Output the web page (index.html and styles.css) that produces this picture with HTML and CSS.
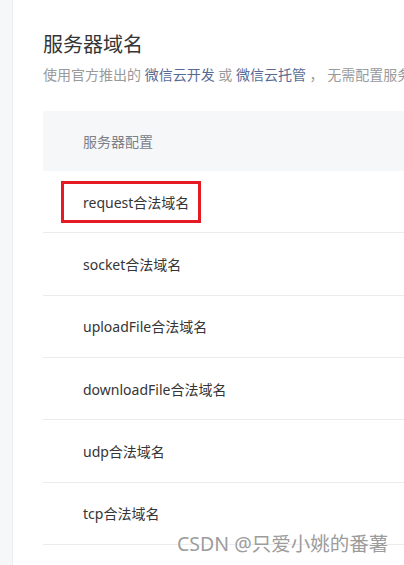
FILE: index.html
```html
<!DOCTYPE html>
<html lang="zh-CN">
<head>
<meta charset="utf-8">
<title>服务器域名</title>
<link rel="stylesheet" href="styles.css">
</head>
<body>
<div class="page">
  <div class="side"></div>
  <div class="card">
    <h1 class="title">服务器域名</h1>
    <p class="desc">使用官方推出的 <a class="link">微信云开发</a> 或 <a class="link">微信云托管</a> ， 无需配置服务器域名即可使用</p>
    <div class="table">
      <div class="thead">服务器配置</div>
      <div class="row"><span>request合法域名</span><div class="mark"></div></div>
      <div class="row"><span>socket合法域名</span></div>
      <div class="row"><span>uploadFile合法域名</span></div>
      <div class="row"><span>downloadFile合法域名</span></div>
      <div class="row"><span>udp合法域名</span></div>
      <div class="row"><span>tcp合法域名</span></div>
    </div>
  </div>
  <div class="watermark">CSDN @只爱小姚的番薯</div>
</div>
</body>
</html>
```
FILE: styles.css
```css
html, body {
  margin: 0;
  padding: 0;
  width: 404px;
  height: 565px;
  overflow: hidden;
  background: #fff;
  font-family: "Noto Sans", "Noto Sans CJK SC", sans-serif;
}
.page {
  position: relative;
  display: flex;
  width: 404px;
  height: 565px;
}
.side {
  width: 12px;
  flex: none;
  background: #f6f7f9;
  border-right: 1px solid #ebedf0;
}
.card {
  flex: 1;
  min-width: 0;
  padding: 31px 0 0 30px;
  overflow: hidden;
}
.title {
  margin: 0;
  font-size: 20px;
  line-height: 28px;
  font-weight: normal;
  color: #353535;
  white-space: nowrap;
}
.desc {
  margin: 6px 0 0;
  font-size: 14px;
  line-height: 20px;
  color: #9a9a9a;
  white-space: nowrap;
}
.link {
  color: #576b95;
  text-decoration: none;
}
.table {
  margin-top: 26px;
  width: 420px;
}
.thead {
  height: 60px;
  display: flex;
  align-items: center;
  padding-left: 40px;
  background: #f6f7f9;
  font-size: 14px;
  color: #7d8087;
}
.row {
  position: relative;
  height: 62.33px;
  box-sizing: border-box;
  border-bottom: 1px solid #ebebeb;
  display: flex;
  align-items: center;
  padding-left: 40px;
  font-size: 14px;
  color: #353535;
}
.mark {
  position: absolute;
  left: 18px;
  top: 10px;
  width: 140px;
  height: 42px;
  box-sizing: border-box;
  border: 3px solid #e41b23;
}
.watermark {
  position: absolute;
  left: 177px;
  top: 529px;
  font-size: 19.5px;
  line-height: 30px;
  color: #9c9c9c;
  white-space: nowrap;
  font-family: "Noto Sans", "Noto Sans CJK SC", sans-serif;
  text-shadow: 0 0 2px #fff, 0 0 2px #fff;
}
```
